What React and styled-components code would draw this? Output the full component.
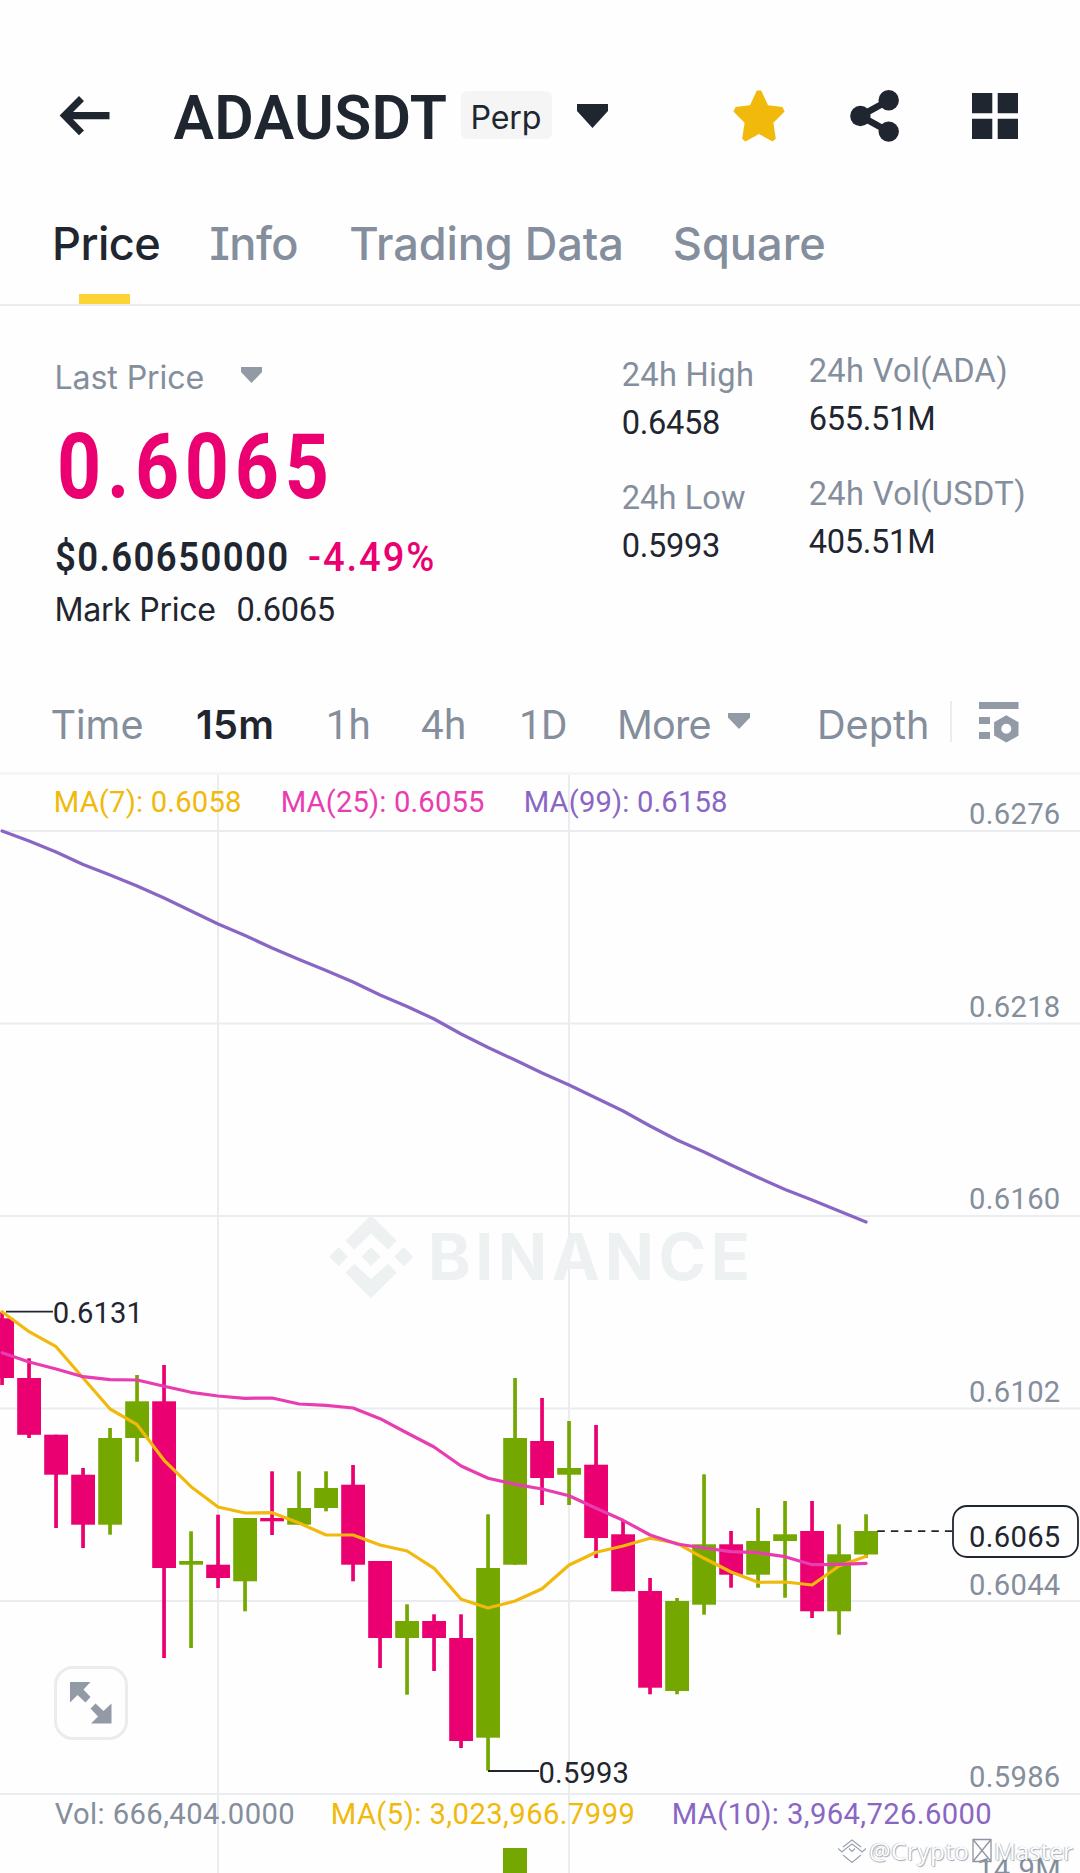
import React from "react";
import styled, { createGlobalStyle } from "styled-components";

const text = "#1f2630";
const muted = "#848e9c";
const line = "#eaecef";
const up = "#74a800";
const down = "#ea0070";
const gold = "#f0b90b";
const pink = "#e83db0";
const violet = "#8a66c4";

const din = `Roboto, "Liberation Sans", sans-serif`;
const sans = `Inter, Roboto, "Liberation Sans", sans-serif`;

const GlobalStyle = createGlobalStyle`
  body { margin: 0; background: #fefefe; }
  * { box-sizing: border-box; }
`;

const Screen = styled.div`
  width: 1080px;
  height: 1873px;
  overflow: hidden;
  display: flex;
  flex-direction: column;
  background: #fefefe;
  color: ${text};
  font-family: ${din};
  white-space: pre;
`;

const Header = styled.header`
  height: 166px;
  padding: 66px 0 0 59px;
  display: flex;
  align-items: center;
  flex: none;
`;

const IconButton = styled.button`
  border: 0;
  padding: 0;
  background: none;
  flex: none;
  display: block;
  line-height: 0;
  margin-left: ${(p) => p.$gap || 0}px;
  margin-bottom: ${(p) => p.$lift || 0}px;
`;

const Pair = styled.h1`
  margin: 6px 0 0 63.5px;
  width: 287.5px;
  flex: none;
  font: 600 60.6px/70px ${din};
  letter-spacing: 0.42px;
`;

const Badge = styled.span`
  width: 91px;
  height: 48px;
  margin-top: -2px;
  padding: 6px 0 0 9.5px;
  border-radius: 6px;
  background: #f5f5f5;
  font: 400 32.2px/42px ${sans};
  letter-spacing: -0.18px;
  flex: none;
`;

const Tabs = styled.nav`
  height: 140px;
  border-bottom: 2px solid ${line};
  padding-left: 52px;
  display: flex;
  flex: none;
`;

const Tab = styled.div`
  position: relative;
  width: ${(p) => p.$width}px;
  padding-top: 48px;
  font: 500 45.2px/60px ${sans};
  font-feature-settings: "cv08";
  letter-spacing: ${(p) => p.$track || 0}px;
  color: ${(p) => (p.$active ? text : muted)};
  &::after {
    content: "";
    display: ${(p) => (p.$active ? "block" : "none")};
    position: absolute;
    left: 27px;
    bottom: 0;
    width: 51px;
    height: 10px;
    background: #fcd535;
  }
`;

const Summary = styled.section`
  height: 370px;
  display: grid;
  grid-template-columns: 567.2px 187px 1fr;
  padding-left: 54.5px;
  flex: none;
`;

const PriceColumn = styled.div`
  padding-top: 51.5px;
  display: flex;
  flex-direction: column;
`;

const LabelRow = styled.div`
  display: flex;
  align-items: center;
  height: 40px;
  font: 400 32.2px/40px ${sans};
  letter-spacing: ${(p) => p.$track || 0}px;
  color: ${(p) => (p.$strong ? text : muted)};
`;

const LabelText = styled.span`
  width: ${(p) => p.$width}px;
  flex: none;
`;

const MarkValue = styled.span`
  font: 400 32.6px/40px ${din};
  letter-spacing: -0.33px;
`;

const LastPrice = styled.div`
  margin: 19.5px 0 15px 2px;
  font: 700 91.7px/100px ${din};
  letter-spacing: 6.8px;
  transform: scaleX(0.84);
  transform-origin: left;
  color: ${down};
`;

const FiatRow = styled.div`
  display: flex;
  height: 50px;
  margin-bottom: 8px;
  font: 600 41.5px/50px ${din};
`;

const Fiat = styled.span`
  width: 253.3px;
  letter-spacing: 1.6px;
  transform: scaleX(0.88);
  transform-origin: left;
`;

const Change = styled.span`
  font-weight: 500;
  font-size: 41px;
  letter-spacing: 2.1px;
  transform: scaleX(0.93);
  transform-origin: left;
  color: ${down};
`;

const StatColumn = styled.div`
  padding-top: ${(p) => p.$top}px;
  display: flex;
  flex-direction: column;
  gap: 35.2px;
`;

const Stat = styled.dl`
  margin: 0;
  font: 400 32.6px/40px ${din};
`;

const StatLabel = styled.dt`
  color: ${muted};
  letter-spacing: ${(p) => p.$track}px;
`;

const StatValue = styled.dd`
  margin: 8px 0 0;
  letter-spacing: -0.28px;
`;

const Intervals = styled.nav`
  height: 99px;
  padding-left: 50.4px;
  border-bottom: 3px solid #f5f5f5;
  display: flex;
  align-items: center;
  flex: none;
`;

const Interval = styled.span`
  width: ${(p) => p.$width}px;
  flex: none;
  font-family: ${(p) => (p.$numeric ? din : sans)};
  font-size: ${(p) => (p.$numeric ? 40.3 : 39.7)}px;
  line-height: 56px;
  font-weight: ${(p) => (p.$active ? 600 : 400)};
  letter-spacing: ${(p) => p.$track || 0}px;
  color: ${(p) => (p.$active ? text : muted)};
  padding-top: ${(p) => (p.$numeric ? 3 : 1)}px;
`;

const Divider = styled.span`
  width: 2px;
  height: 41px;
  margin: -5px 27px 0 0;
  background: ${line};
`;

const ChartArea = styled.section`
  position: relative;
  height: 1098px;
  flex: none;
`;

const ChartSvg = styled.svg`
  display: block;
  font-family: ${din};
`;

const Legend = styled.div`
  position: absolute;
  top: ${(p) => p.$top}px;
  left: ${(p) => p.$left}px;
  display: flex;
  font: 400 29.2px/40px ${din};
`;

const LegendItem = styled.span`
  width: ${(p) => p.$width}px;
  letter-spacing: ${(p) => p.$track}px;
  color: ${(p) => p.$color};
`;

const Expand = styled.button`
  position: absolute;
  left: 54px;
  top: 891px;
  width: 74px;
  height: 74px;
  padding: 0;
  border: 3px solid ${line};
  border-radius: 19px;
  background: #fefefe;
  display: grid;
  place-items: center;
`;

const Credit = styled.div`
  position: absolute;
  left: 838px;
  top: 1063px;
  display: flex;
  align-items: center;
  height: 26px;
  color: #fff;
  font: 400 24px/26px "Noto Sans", sans-serif;
  text-shadow: -0.5px 0 1px rgba(112, 122, 138, 0.7), 1px 1px 1px rgba(112, 122, 138, 0.6);
`;

const CreditText = styled.span`
  width: ${(p) => p.$width}px;
  letter-spacing: ${(p) => p.$track}px;
`;

/* [high, bodyTop, bodyBottom, low, rising] for each 15 minute candle */
const candles = [
  [1311.7, 1318.3, 1378, 1385, 0], [1358.3, 1378, 1434.8, 1438, 0], [1434.7, 1434.7, 1474.7, 1528, 0],
  [1468, 1474.7, 1524.7, 1548, 0], [1428, 1438, 1524.7, 1534.7, 1], [1375, 1401.3, 1438, 1461.7, 1],
  [1365, 1401.3, 1568, 1658, 0], [1531.3, 1561, 1564.7, 1648, 1], [1514.7, 1564.7, 1578, 1588, 0],
  [1518, 1518, 1581.3, 1611.3, 1], [1471.3, 1518, 1521.3, 1535, 0], [1471.3, 1508, 1524.7, 1524.7, 1],
  [1471.3, 1488, 1508, 1511.3, 1], [1465, 1484.7, 1564.7, 1581.3, 0], [1561, 1561, 1638, 1668, 0],
  [1604.3, 1621, 1638, 1694.7, 1], [1614.3, 1621, 1638, 1671, 0], [1614.3, 1638, 1741, 1748, 0],
  [1514.3, 1568, 1737.7, 1770.7, 1], [1378, 1438, 1564.7, 1564.7, 1], [1398, 1441, 1478, 1505, 0],
  [1421, 1468, 1474.7, 1505, 1], [1425, 1464.7, 1538, 1558, 0], [1521, 1534.3, 1591.3, 1591.3, 0],
  [1578, 1591, 1687.7, 1694.3, 0], [1598, 1601, 1691, 1694.3, 1], [1474.3, 1544.3, 1604.7, 1614.7, 1],
  [1531, 1544.3, 1574.7, 1587.7, 0], [1508, 1541, 1574.7, 1587.7, 1], [1501, 1534.3, 1541, 1597.7, 1],
  [1501, 1531, 1611.3, 1618, 0], [1524.3, 1554.3, 1611.3, 1634.7, 1], [1514.3, 1531, 1554.5, 1558, 1],
];

const ma7 = [1311.7, 1331.7, 1346.7, 1378, 1409, 1424.7, 1460.3, 1486.7, 1507, 1513, 1512.7, 1523, 1535, 1535, 1545, 1551, 1568.3, 1599.3, 1608, 1601, 1588.7, 1565, 1552.3, 1546, 1538.3, 1543.3, 1558.3, 1572, 1582.3, 1582, 1585, 1566, 1556.3];
const ma25 = [1352.7, 1362, 1369, 1376.7, 1379.7, 1380, 1386.3, 1392.3, 1396, 1398.3, 1398, 1404, 1405.3, 1408, 1418.7, 1433, 1447, 1466, 1478.3, 1484.3, 1489, 1495.7, 1508.3, 1520.3, 1535, 1544, 1548, 1551.7, 1552.7, 1556.7, 1564.7, 1564.3, 1563.3];
const ma99 = [831, 841, 852, 864.5, 875, 886, 898, 911, 924, 935.5, 948, 959.5, 970.5, 982, 995, 1006.5, 1019, 1034, 1047.5, 1060, 1073, 1085, 1098, 1111, 1126, 1140, 1152, 1165, 1177.5, 1189.5, 1200, 1211, 1222];

const gridRows = [831, 1023.5, 1216, 1408.5, 1601, 1794];
const axis = [["0.6276", 824], ["0.6218", 1016.5], ["0.6160", 1209], ["0.6102", 1401.7], ["0.6044", 1594.5], ["0.5986", 1786.7]];

const cx = (i) => 2.1 + i * 27;
const points = (ys) => ys.map((y, i) => `${cx(i)},${y}`).join(" ");

function Caret({ width, height, side, color }) {
  return (
    <svg width={width} height={height} viewBox={`0 0 ${width} ${height}`}>
      <path d={`M0 0H${width}V${side}L${width / 2} ${height}L0 ${side}Z`} fill={color} />
    </svg>
  );
}

function Line({ values, color }) {
  return <polyline points={points(values)} fill="none" stroke={color} strokeWidth="3.2" strokeLinejoin="round" strokeLinecap="round" />;
}

function BinanceMark() {
  return (
    <path d="M213 75 290 152 264 179 213 130 163 179 137 152ZM137 248 163 221 213 268 264 221 290 248 213 325ZM88 200 116 171 144 200 116 229ZM283 200 311 171 340 200 311 229ZM185 200 213 171 242 200 213 228Z" />
  );
}

function Chart() {
  return (
    <ChartSvg width="1080" height="1098" viewBox="0 775 1080 1098">
      <g stroke={line} strokeWidth="2">
        {gridRows.map((y) => <path key={y} d={`M0 ${y}H1080`} />)}
        <path d="M218 775V1873M569 775V1873" />
      </g>
      <g fill="#eef1f1">
        <g transform="translate(300 1190) scale(0.3333)"><BinanceMark /></g>
        <text x="428" y="1280" fontFamily={sans} fontWeight="700" fontSize="64.4" letterSpacing="4.7">BINANCE</text>
      </g>
      <g fill={muted} fontSize="29.2" letterSpacing="0.31">
        {axis.map(([label, y]) => <text key={label} x="969" y={y}>{label}</text>)}
        <text x="977" y="1879">14.9M</text>
      </g>
      {candles.map(([high, top, bottom, low, rising], i) => (
        <g key={i} fill={rising ? up : down}>
          <rect x={cx(i) - 1.9} y={high} width="3.7" height={low - high} />
          <rect x={cx(i) - 11.9} y={top} width="23.8" height={bottom - top} />
        </g>
      ))}
      <rect x="503" y="1848" width="24" height="25" fill={up} />
      <g stroke={text} strokeWidth="1.8" fill="none">
        <path d="M6 1311.7H53M488 1771H539" />
        <path d="M877.4 1531.2H952" strokeDasharray="7.4 6.1" />
        <rect x="953" y="1506" width="125" height="51" rx="14" fill="#fefefe" />
      </g>
      <Line values={ma7} color={gold} />
      <Line values={ma25} color={pink} />
      <Line values={ma99} color={violet} />
      <g fill={text} fontSize="29.2" letterSpacing="0.1">
        <text x="52.8" y="1322.7">0.6131</text>
        <text x="538.6" y="1782.7">0.5993</text>
        <text x="969" y="1546.5" letterSpacing="0.31">0.6065</text>
      </g>
    </ChartSvg>
  );
}

export default function App() {
  return (
    <Screen>
      <GlobalStyle />
      <Header>
        <IconButton aria-label="Back">
          <svg width="51" height="42" viewBox="59 95 51 42" fill={text}>
            <path d="M59.6 115.6 79 96 84 101 73 112H109.5V119.3H73L84 130.4 79 135.3Z" />
          </svg>
        </IconButton>
        <Pair>ADAUSDT</Pair>
        <Badge>Perp</Badge>
        <IconButton $gap={25} aria-label="Choose pair">
          <Caret width={31} height={24} side={7} color={text} />
        </IconButton>
        <IconButton $gap={125.3} aria-label="Favourite">
          <svg width="52" height="52" viewBox="733 90 52 52" fill={gold}>
            <path d="M756.8 90.4H761.2L768 105.2 782.4 107.1 784.6 111.4 773.4 122.8 775.8 138.8 772.6 141.4 759 134.1 745.4 141.4 742.2 138.8 744.6 122.8 733.4 111.4 735.6 107.1 750 105.2Z" />
          </svg>
        </IconButton>
        <IconButton $gap={65} aria-label="Share">
          <svg width="50" height="52" viewBox="850 90 50 52" fill={text}>
            <path d="M888.7 100.3 860.3 116 888.7 131.6" fill="none" stroke={text} strokeWidth="6.6" />
            <circle cx="860.4" cy="116" r="10.2" />
            <circle cx="888.7" cy="100.3" r="10.2" />
            <circle cx="888.7" cy="131.6" r="10.2" />
          </svg>
        </IconButton>
        <IconButton $gap={72} aria-label="Dashboard">
          <svg width="46" height="46" viewBox="0 0 46 46" fill={text}>
            <path d="M0 0H20.3V20.3H0ZM25.7 0H46V20.3H25.7ZM0 25.7H20.3V46H0ZM25.7 25.7H46V46H25.7Z" />
          </svg>
        </IconButton>
      </Header>

      <Tabs>
        <Tab $width={157.5} $track={-0.57} $active>Price</Tab>
        <Tab $width={139.7} $track={-0.6}>Info</Tab>
        <Tab $width={323.5} $track={-0.12}>Trading Data</Tab>
        <Tab $width={170}>Square</Tab>
      </Tabs>

      <Summary>
        <PriceColumn>
          <LabelRow $track={-0.14}>
            <LabelText $width={186.5}>Last Price</LabelText>
            <IconButton as="span" $lift={6}>
              <Caret width={21} height={16} side={5} color="#929aa5" />
            </IconButton>
          </LabelRow>
          <LastPrice>0.6065</LastPrice>
          <FiatRow>
            <Fiat>$0.60650000</Fiat>
            <Change>-4.49%</Change>
          </FiatRow>
          <LabelRow $strong $track={-0.35}>
            <LabelText $width={182}>Mark Price</LabelText>
            <MarkValue>0.6065</MarkValue>
          </LabelRow>
        </PriceColumn>
        <StatColumn $top={48.5}>
          <Stat><StatLabel $track={0.3}>24h High</StatLabel><StatValue>0.6458</StatValue></Stat>
          <Stat><StatLabel $track={0.09}>24h Low</StatLabel><StatValue>0.5993</StatValue></Stat>
        </StatColumn>
        <StatColumn $top={44.7}>
          <Stat><StatLabel $track={0.33}>24h Vol(ADA)</StatLabel><StatValue>655.51M</StatValue></Stat>
          <Stat><StatLabel $track={0.36}>24h Vol(USDT)</StatLabel><StatValue>405.51M</StatValue></Stat>
        </StatColumn>
      </Summary>

      <Intervals>
        <Interval $width={145.6}>Time</Interval>
        <Interval $width={129.8} $track={0.22} $active>15m</Interval>
        <Interval $width={95.2} $numeric>1h</Interval>
        <Interval $width={98} $numeric $track={0.43}>4h</Interval>
        <Interval $width={98} $numeric $track={-0.58}>1D</Interval>
        <Interval $width={111.5} $track={-0.76}>More</Interval>
        <IconButton as="span" $lift={6}>
          <Caret width={22} height={16} side={4.5} color="#929aa5" />
        </IconButton>
        <Interval $width={66.5} />
        <Interval $width={133}>Depth</Interval>
        <Divider />
        <IconButton aria-label="Chart settings" $lift={4}>
          <svg width="40" height="42" viewBox="979 701 40 42" fill="#929aa5">
            <path d="M979 702H1018.5V709H979ZM979 717H990V724H979ZM979 732H990V739H979Z" />
            <path fillRule="evenodd" d="M1006.3 715.3 1018.5 722.2V735.6L1006.3 742.4 994.1 735.6V722.2ZM1006.3 723.8A5 5 0 1 0 1006.3 733.8 5 5 0 1 0 1006.3 723.8Z" />
          </svg>
        </IconButton>
      </Intervals>

      <ChartArea>
        <Chart />
        <Legend $top={6.7} $left={53.7}>
          <LegendItem $width={227} $track={0.2} $color={gold}>MA(7): 0.6058</LegendItem>
          <LegendItem $width={243} $track={0.15} $color={pink}>MA(25): 0.6055</LegendItem>
          <LegendItem $width={220} $track={0.15} $color={violet}>MA(99): 0.6158</LegendItem>
        </Legend>
        <Legend $top={1018.7} $left={54.7}>
          <LegendItem $width={276} $track={0.41} $color={muted}>Vol: 666,404.0000</LegendItem>
          <LegendItem $width={341} $track={0.45} $color={gold}>MA(5): 3,023,966.7999</LegendItem>
          <LegendItem $width={330} $track={0.4} $color={violet}>MA(10): 3,964,726.6000</LegendItem>
        </Legend>
        <Expand aria-label="Full screen">
          <svg width="42" height="42" viewBox="0 0 42 42" fill="#929aa5">
            <path d="M0 0H20.5L13.5 7.5 20.5 15 15.5 20.5 7.5 13 0 20.5ZM41.5 41.5H21L28 34.5 20.5 26.5 25.5 21.5 33.5 29 41.5 21.5Z" />
          </svg>
        </Expand>
        <Credit>
          <svg width="31" height="26" viewBox="0 -1 31 26" fill="none" stroke="#9aa2ae" strokeWidth="1.1">
            <path d="M5 8 14 1 23 8M8 9.500 14 5 20 9.500M5 16 14 23.500 23 16M0 9.500 4 13 8 9.500M20 9.500 24 13 28 9.500M11 9.500 14 12.500 17 9.500" />
          </svg>
          <CreditText $width={102} $track={0.5}>@Crypto</CreditText>
          <svg width="23" height="26" viewBox="0 0 23 26" fill="none" stroke="#8d95a2" strokeWidth="1.3">
            <path d="M2 1.500H20V23.500H2ZM2 1.500 20 23.500M20 1.500 2 23.500" />
          </svg>
          <CreditText $width={80} $track={0}>Master</CreditText>
        </Credit>
      </ChartArea>
    </Screen>
  );
}
